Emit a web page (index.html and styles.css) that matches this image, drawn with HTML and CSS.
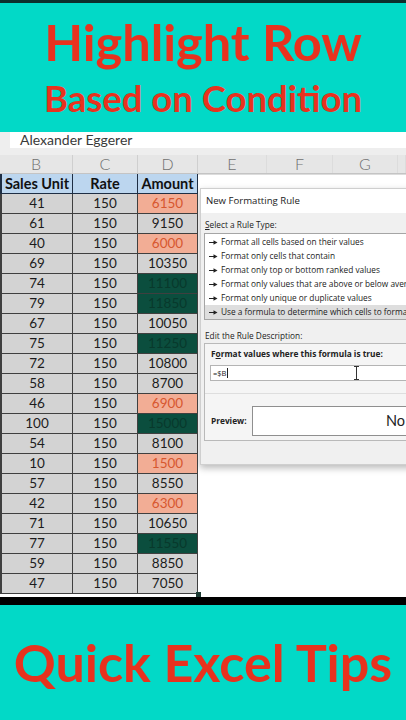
FILE: index.html
```html
<!DOCTYPE html>
<html>
<head>
<meta charset="utf-8">
<link rel="stylesheet" href="styles.css">
</head>
<body>
<div class="page">
  <header class="banner top">
    <div class="t1">Highlight Row</div>
    <div class="t2">Based on Condition</div>
  </header>
  <div class="namebar"><div class="namebox">Alexander Eggerer</div></div>
  <div class="sheet">
    <div class="table">
      <div class="colhdr left"><div>B</div><div>C</div><div>D</div></div>
      <div class="row head"><div>Sales Unit</div><div>Rate</div><div>Amount</div></div>
      <div class="row"><div>41</div><div>150</div><div class="lo">6150</div></div>
      <div class="row"><div>61</div><div>150</div><div>9150</div></div>
      <div class="row"><div>40</div><div>150</div><div class="lo">6000</div></div>
      <div class="row"><div>69</div><div>150</div><div>10350</div></div>
      <div class="row"><div>74</div><div>150</div><div class="hi">11100</div></div>
      <div class="row"><div>79</div><div>150</div><div class="hi">11850</div></div>
      <div class="row"><div>67</div><div>150</div><div>10050</div></div>
      <div class="row"><div>75</div><div>150</div><div class="hi">11250</div></div>
      <div class="row"><div>72</div><div>150</div><div>10800</div></div>
      <div class="row"><div>58</div><div>150</div><div>8700</div></div>
      <div class="row"><div>46</div><div>150</div><div class="lo">6900</div></div>
      <div class="row"><div>100</div><div>150</div><div class="hi">15000</div></div>
      <div class="row"><div>54</div><div>150</div><div>8100</div></div>
      <div class="row"><div>10</div><div>150</div><div class="lo">1500</div></div>
      <div class="row"><div>57</div><div>150</div><div>8550</div></div>
      <div class="row"><div>42</div><div>150</div><div class="lo">6300</div></div>
      <div class="row"><div>71</div><div>150</div><div>10650</div></div>
      <div class="row"><div>77</div><div>150</div><div class="hi">11550</div></div>
      <div class="row"><div>59</div><div>150</div><div>8850</div></div>
      <div class="row last"><div>47</div><div>150</div><div>7050</div><span class="handle"></span></div>
    </div>
    <div class="right">
      <div class="colhdr wide"><div>E</div><div>F</div><div>G</div><div></div></div>
      <div class="canvas">
        <div class="dialog">
          <div class="dtitle">New Formatting Rule</div>
          <div class="dbody">
            <div class="lbl"><u>S</u>elect a Rule Type:</div>
            <div class="list">
              <div class="item"><svg class="arr" viewBox="0 0 9 5" width="9" height="5"><path d="M0 2.5H5.5" stroke="#222" stroke-width="1"/><path d="M4.5 0.3L8.5 2.5L4.5 4.7Z" fill="#222"/></svg>Format all cells based on their values</div>
              <div class="item"><svg class="arr" viewBox="0 0 9 5" width="9" height="5"><path d="M0 2.5H5.5" stroke="#222" stroke-width="1"/><path d="M4.5 0.3L8.5 2.5L4.5 4.7Z" fill="#222"/></svg>Format only cells that contain</div>
              <div class="item"><svg class="arr" viewBox="0 0 9 5" width="9" height="5"><path d="M0 2.5H5.5" stroke="#222" stroke-width="1"/><path d="M4.5 0.3L8.5 2.5L4.5 4.7Z" fill="#222"/></svg>Format only top or bottom ranked values</div>
              <div class="item"><svg class="arr" viewBox="0 0 9 5" width="9" height="5"><path d="M0 2.5H5.5" stroke="#222" stroke-width="1"/><path d="M4.5 0.3L8.5 2.5L4.5 4.7Z" fill="#222"/></svg>Format only values that are above or below average</div>
              <div class="item"><svg class="arr" viewBox="0 0 9 5" width="9" height="5"><path d="M0 2.5H5.5" stroke="#222" stroke-width="1"/><path d="M4.5 0.3L8.5 2.5L4.5 4.7Z" fill="#222"/></svg>Format only unique or duplicate values</div>
              <div class="item sel"><svg class="arr" viewBox="0 0 9 5" width="9" height="5"><path d="M0 2.5H5.5" stroke="#222" stroke-width="1"/><path d="M4.5 0.3L8.5 2.5L4.5 4.7Z" fill="#222"/></svg>Use a formula to determine which cells to format</div>
            </div>
            <div class="lbl lbl2">Edit the Rule Description:</div>
            <div class="desc">
              <div class="blbl">F<u>o</u>rmat values where this formula is true:</div>
              <div class="input"><span class="val">=$B</span><span class="caret"></span>
                <svg class="ibeam" viewBox="0 0 7 14" width="7" height="14"><path d="M1 0.5H6M1 13.5H6M3.5 0.5V13.5" stroke="#333" stroke-width="1" fill="none"/></svg>
              </div>
              <div class="sep"></div>
              <div class="prev">
                <div class="blbl plbl">Preview:</div>
                <div class="pbox">No Format Set</div>
              </div>
            </div>
          </div>
        </div>
      </div>
    </div>
  </div>
  <div class="blackband"></div>
  <footer class="banner bottom">Quick Excel Tips</footer>
</div>
</body>
</html>
```
FILE: styles.css
```css
* { box-sizing: border-box; }
html, body { margin: 0; padding: 0; }
body { width: 406px; height: 720px; overflow: hidden; background: #fff; font-family: Lato, "Open Sans", sans-serif; }
.page { width: 406px; height: 720px; display: flex; flex-direction: column; overflow: hidden; }

.banner { background: #02d9c7; color: #e8321e; font-family: Lato, sans-serif; font-weight: 700; text-align: center; }
.top { height: 132px; border-top: 3px solid #0c2f2c; padding-top: 14px; }
.t1 { font-size: 50.5px; line-height: 50px; }
.t2 { font-size: 36.5px; line-height: 36px; margin-top: 13px; }

.namebar { height: 23px; background: #eeeeee; padding-left: 10px; }
.namebox { height: 16px; background: #fff; font-size: 14px; line-height: 16px; color: #3a3a3a; padding-left: 10px; }

.sheet { height: 442px; display: flex; }
.table { width: 198px; flex: none; position: relative; }
.colhdr { display: grid; height: 19px; background: #e6e6e6; border-bottom: 1px solid #c4c4c4; font-size: 16px; line-height: 18px; color: #707070; font-weight: 300; }
.colhdr div { text-align: center; border-right: 1px solid #cfcfcf; }
.colhdr.left { grid-template-columns: 73px 65px 60px; }
.colhdr.wide { grid-template-columns: 69px 66px 65px 1fr; }
.colhdr.wide div { border-right-color: #dcdcdc; }

.row { display: grid; grid-template-columns: 73px 65px 60px; height: 20px; position: relative; }
.row div { background: #d3d3d3; border-right: 1px solid #3f3f3f; border-bottom: 1px solid #3f3f3f; font-size: 13.5px; line-height: 19px; text-align: center; color: #1c1c1c; }
.row div:first-child { border-left: 2px solid #3f3f3f; }
.row.head div { background: #bcd6ef; font-weight: 700; font-size: 14.5px; color: #111; border-color: #1e2e44; }
.row div.lo { background: #f2ad95; color: #d7572f; }
.row div.hi { background: #0b4e3e; color: #08392c; }
.handle { position: absolute; right: -3px; bottom: -3px; width: 5px; height: 5px; background: #1d3b33; }

.right { flex: 1; overflow: hidden; }
.canvas { padding-top: 13px; border-top: 1px solid #dcdcdc; }
.dialog { margin-left: 2px; width: 260px; height: 277px; border: 1px solid #cfcfcf; border-right: none; box-shadow: 0 3px 7px rgba(0,0,0,0.28); background: #f0f0f0; font-family: "Open Sans", Lato, sans-serif; font-size: 8.3px; color: #222; }
.dtitle { height: 24px; background: #fff; font-size: 9.6px; line-height: 23px; padding-left: 5px; color: #222; }
.dbody { padding-left: 3px; }
.lbl { height: 12px; line-height: 12px; margin-top: 6px; padding-left: 1px; }
.lbl2 { margin-top: 10px; }
.list { margin-top: 2px; background: #fff; border: 1px solid #a5a5a5; border-right: none; padding: 1px 0 0; }
.item { height: 14px; line-height: 14px; padding-left: 4px; white-space: nowrap; display: flex; align-items: center; gap: 3px; }
.item.sel { background: #dedede; }
.arr { flex: none; }

.desc { margin-top: 1px; height: 98px; background: #f5f5f5; border: 1px solid #b9b9b9; border-right: none; }
.blbl { font-weight: 700; margin-top: 4px; height: 12px; line-height: 12px; padding-left: 6px; }
.input { position: relative; margin: 5px 0 0 5px; height: 16px; background: #fff; border: 1px solid #b4b4b4; border-right: none; display: flex; align-items: center; padding-left: 2px; font-size: 7.5px; }
.caret { width: 1px; height: 10px; background: #222; margin-left: 1px; }
.ibeam { position: absolute; left: 142px; top: 0px; }
.sep { margin-top: 12px; height: 1px; background: #dedede; }
.prev { display: flex; align-items: center; margin-top: 12px; height: 30px; }
.plbl { margin-top: 0; width: 47px; flex: none; }
.pbox { height: 30px; flex: 1; background: #fff; border: 1px solid #8f8f8f; border-right: none; font-family: Lato, sans-serif; font-size: 14.5px; line-height: 28px; padding-left: 133px; white-space: nowrap; color: #222; }

.blackband { height: 8px; background: #000; margin-top: 0; }
.bottom { flex: 1; font-size: 52px; line-height: 52px; padding-top: 31px; }
```
